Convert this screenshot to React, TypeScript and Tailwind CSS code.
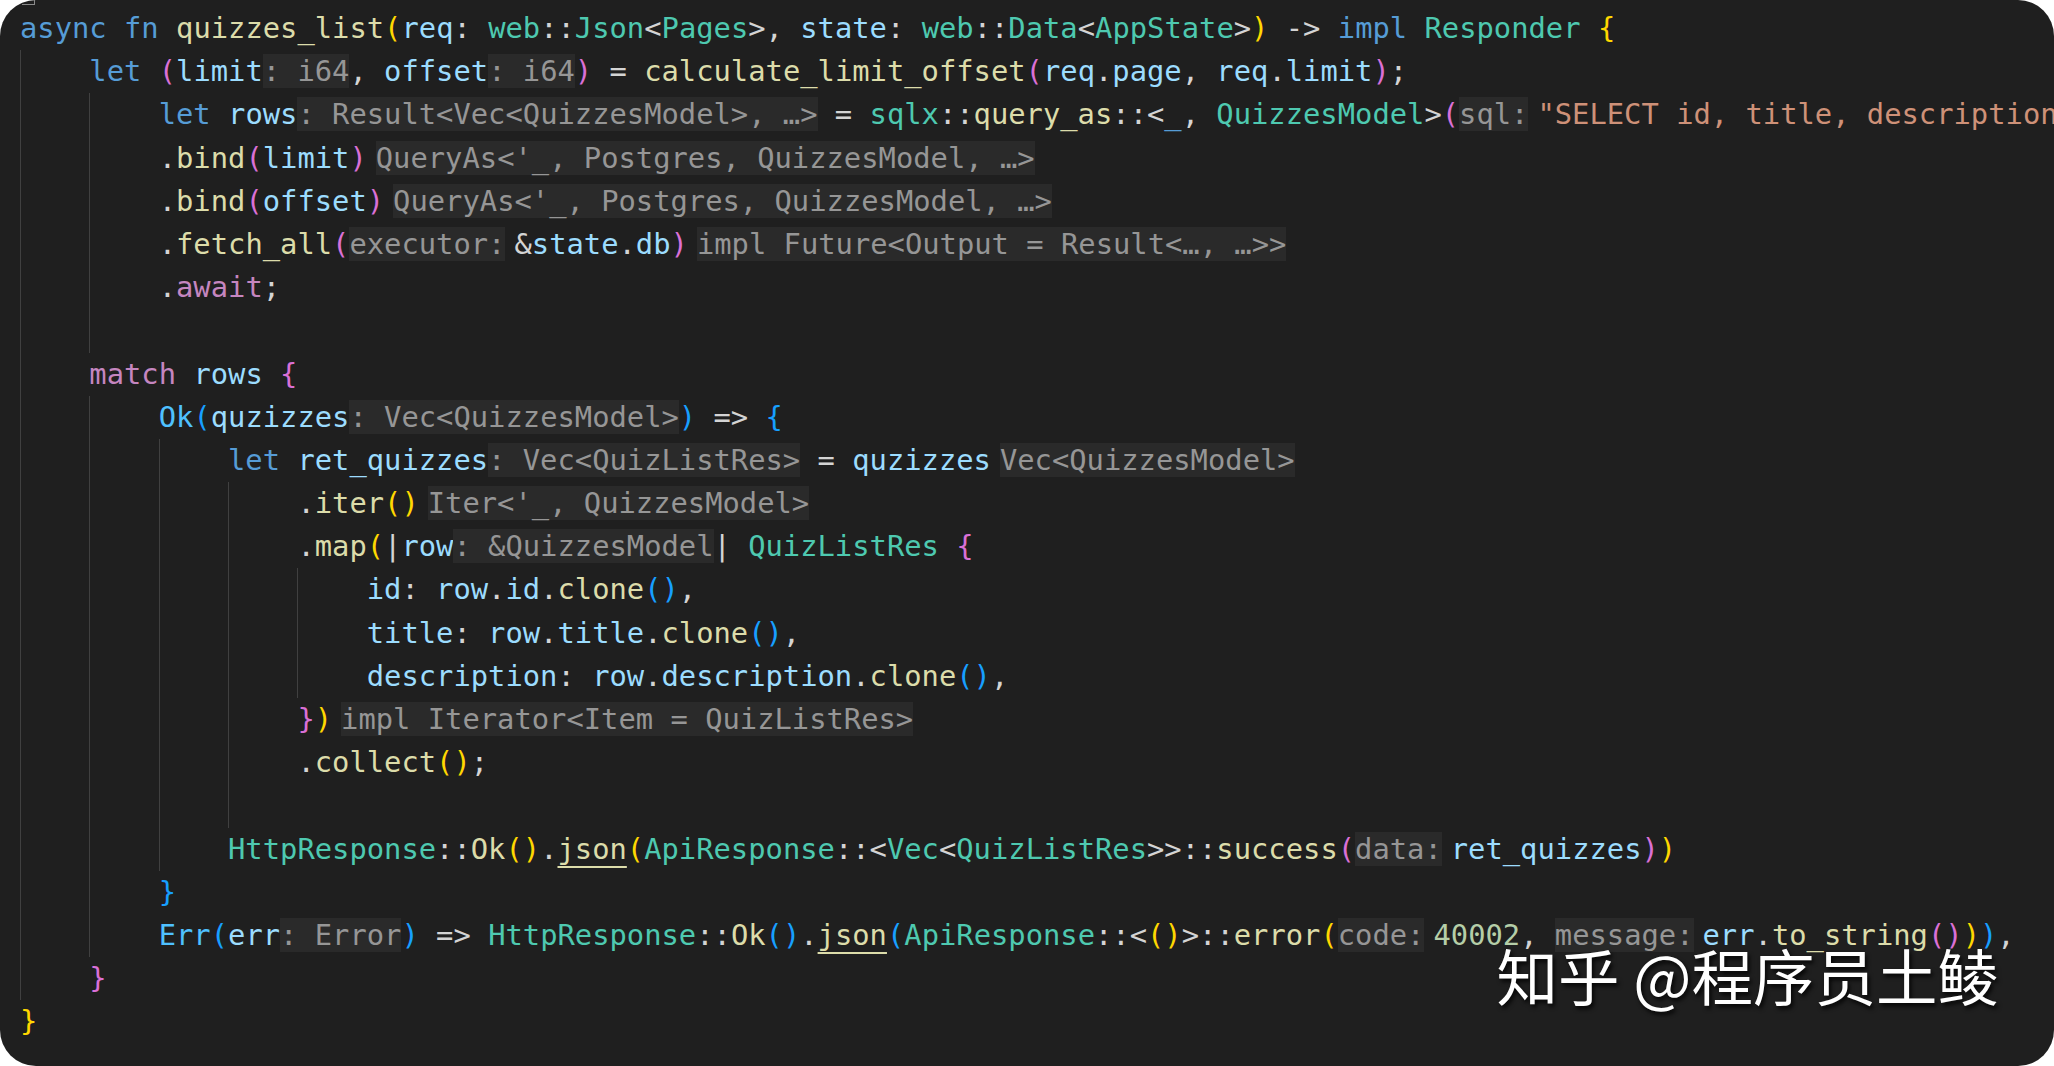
import React from "react";

type Tok = [string, string];
type Line = [number, Tok[]];

// token kinds -> tailwind classes (vs code dark modern-ish)
const cls: Record<string, string> = {
  kw: "text-[#569cd6]",
  ct: "text-[#c586c0]",
  fn: "text-[#dcdcaa]",
  v: "text-[#9cdcfe]",
  ty: "text-[#4ec9b0]",
  s: "text-[#ce9178]",
  n: "text-[#b5cea8]",
  p: "text-[#d4d4d4]",
  en: "text-[#4fc1ff]",
  y: "text-[#ffd700]",
  pk: "text-[#da70d6]",
  bl: "text-[#179fff]",
  h: "bg-[#2a2a2a] text-[#969696]",
  hl: "ml-[9px] bg-[#2a2a2a] text-[#969696]",
  hr: "mr-[9px] bg-[#2a2a2a] text-[#969696]",
  u: "text-[#dcdcaa] underline decoration-[#dcdcaa] decoration-2 underline-offset-[7px]",
};

const lines: Line[] = [
  [0, [["kw", "async"], ["p", " "], ["kw", "fn"], ["p", " "], ["fn", "quizzes_list"], ["y", "("], ["v", "req"], ["p", ": "], ["ty", "web"], ["p", "::"], ["ty", "Json"], ["p", "<"], ["ty", "Pages"], ["p", ">, "], ["v", "state"], ["p", ": "], ["ty", "web"], ["p", "::"], ["ty", "Data"], ["p", "<"], ["ty", "AppState"], ["p", ">"], ["y", ")"], ["p", " -> "], ["kw", "impl"], ["p", " "], ["ty", "Responder"], ["p", " "], ["y", "{"]]],
  [1, [["kw", "let"], ["p", " "], ["pk", "("], ["v", "limit"], ["h", ": i64"], ["p", ", "], ["v", "offset"], ["h", ": i64"], ["pk", ")"], ["p", " = "], ["fn", "calculate_limit_offset"], ["pk", "("], ["v", "req"], ["p", "."], ["v", "page"], ["p", ", "], ["v", "req"], ["p", "."], ["v", "limit"], ["pk", ")"], ["p", ";"]]],
  [2, [["kw", "let"], ["p", " "], ["v", "rows"], ["h", ": Result<Vec<QuizzesModel>, …>"], ["p", " = "], ["ty", "sqlx"], ["p", "::"], ["fn", "query_as"], ["p", "::<"], ["kw", "_"], ["p", ", "], ["ty", "QuizzesModel"], ["p", ">"], ["pk", "("], ["hr", "sql:"], ["s", "\"SELECT id, title, description FROM quizzes ORDER BY id LIMIT $1 OFFSET $2\""]]],
  [2, [["p", "."], ["fn", "bind"], ["pk", "("], ["v", "limit"], ["pk", ")"], ["hl", "QueryAs<'_, Postgres, QuizzesModel, …>"]]],
  [2, [["p", "."], ["fn", "bind"], ["pk", "("], ["v", "offset"], ["pk", ")"], ["hl", "QueryAs<'_, Postgres, QuizzesModel, …>"]]],
  [2, [["p", "."], ["fn", "fetch_all"], ["pk", "("], ["hr", "executor:"], ["p", "&"], ["v", "state"], ["p", "."], ["v", "db"], ["pk", ")"], ["hl", "impl Future<Output = Result<…, …>>"]]],
  [2, [["p", "."], ["ct", "await"], ["p", ";"]]],
  [2, []],
  [1, [["ct", "match"], ["p", " "], ["v", "rows"], ["p", " "], ["pk", "{"]]],
  [2, [["en", "Ok"], ["bl", "("], ["v", "quzizzes"], ["h", ": Vec<QuizzesModel>"], ["bl", ")"], ["p", " => "], ["bl", "{"]]],
  [3, [["kw", "let"], ["p", " "], ["v", "ret_quizzes"], ["h", ": Vec<QuizListRes>"], ["p", " = "], ["v", "quzizzes"], ["hl", "Vec<QuizzesModel>"]]],
  [4, [["p", "."], ["fn", "iter"], ["y", "()"], ["hl", "Iter<'_, QuizzesModel>"]]],
  [4, [["p", "."], ["fn", "map"], ["y", "("], ["p", "|"], ["v", "row"], ["h", ": &QuizzesModel"], ["p", "| "], ["ty", "QuizListRes"], ["p", " "], ["pk", "{"]]],
  [5, [["v", "id"], ["p", ": "], ["v", "row"], ["p", "."], ["v", "id"], ["p", "."], ["fn", "clone"], ["bl", "()"], ["p", ","]]],
  [5, [["v", "title"], ["p", ": "], ["v", "row"], ["p", "."], ["v", "title"], ["p", "."], ["fn", "clone"], ["bl", "()"], ["p", ","]]],
  [5, [["v", "description"], ["p", ": "], ["v", "row"], ["p", "."], ["v", "description"], ["p", "."], ["fn", "clone"], ["bl", "()"], ["p", ","]]],
  [4, [["pk", "}"], ["y", ")"], ["hl", "impl Iterator<Item = QuizListRes>"]]],
  [4, [["p", "."], ["fn", "collect"], ["y", "()"], ["p", ";"]]],
  [4, []],
  [3, [["ty", "HttpResponse"], ["p", "::"], ["fn", "Ok"], ["y", "()"], ["p", "."], ["u", "json"], ["y", "("], ["ty", "ApiResponse"], ["p", "::<"], ["ty", "Vec"], ["p", "<"], ["ty", "QuizListRes"], ["p", ">>::"], ["fn", "success"], ["pk", "("], ["hr", "data:"], ["v", "ret_quizzes"], ["pk", ")"], ["y", ")"]]],
  [2, [["bl", "}"]]],
  [2, [["en", "Err"], ["bl", "("], ["v", "err"], ["h", ": Error"], ["bl", ")"], ["p", " => "], ["ty", "HttpResponse"], ["p", "::"], ["fn", "Ok"], ["bl", "()"], ["p", "."], ["u", "json"], ["bl", "("], ["ty", "ApiResponse"], ["p", "::<"], ["y", "()"], ["p", ">::"], ["fn", "error"], ["y", "("], ["hr", "code:"], ["n", "40002"], ["p", ", "], ["hr", "message:"], ["v", "err"], ["p", "."], ["fn", "to_string"], ["pk", "()"], ["y", ")"], ["bl", ")"], ["p", ","]]],
  [1, [["pk", "}"]]],
  [0, [["y", "}"]]],
];

function CodeLine({ indent, toks }: { indent: number; toks: Tok[] }) {
  return (
    <div className="flex h-[43.2px]">
      {Array.from({ length: indent }).map((_, i) => (
        <span key={i} className="w-[4ch] shrink-0 border-l border-[#404040]" />
      ))}
      <span className="whitespace-pre leading-[43.2px]">
        {toks.map(([k, text], i) => (
          <span key={i} className={cls[k]}>
            {text}
          </span>
        ))}
      </span>
    </div>
  );
}

export default function App() {
  return (
    <div className="h-screen w-full bg-white">
      <div className="relative h-full w-full overflow-hidden rounded-[36px] bg-[#1f1f1f] pl-[20px] pt-[7px] font-['DejaVu_Sans_Mono',monospace] text-[28.8px]">
        {lines.map(([indent, toks], i) => (
          <CodeLine key={i} indent={indent} toks={toks} />
        ))}

        {/* watermark */}
        <div className="absolute right-[55px] top-[944px] font-['Noto_Sans_CJK_SC',sans-serif] text-[61.5px] font-normal leading-none text-white [text-shadow:2px_3px_4px_rgba(0,0,0,0.85)]">
          知乎 @程序员土鲮
        </div>
      </div>
      {/* tiny crop mark at the top-left */}
      <span className="absolute left-[22px] top-0 h-[5px] w-[13px] border-b border-r border-[#8a8a8a]" />
    </div>
  );
}
